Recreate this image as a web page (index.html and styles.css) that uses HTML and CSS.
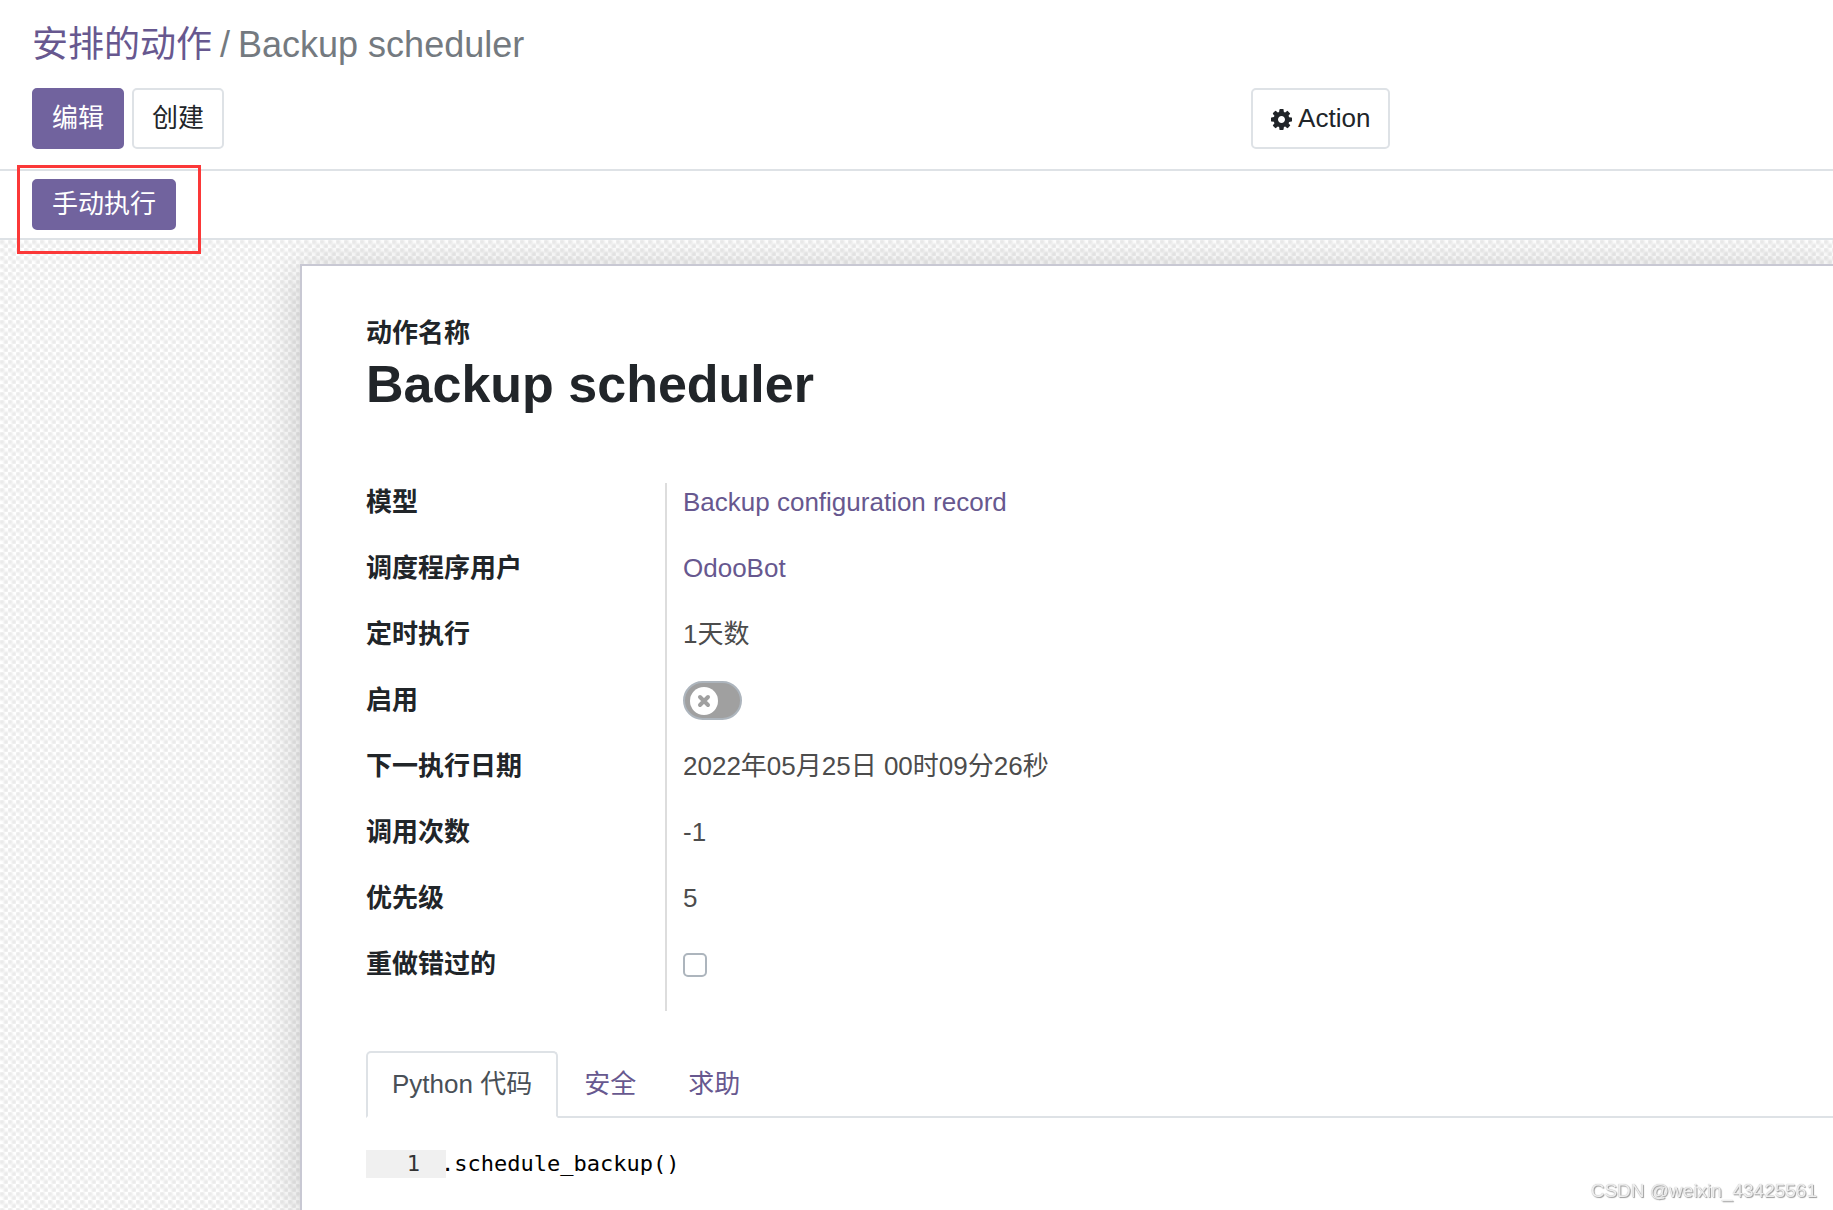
FILE: index.html
```html
<!DOCTYPE html>
<html lang="zh-CN">
  <head>
    <meta charset="utf-8" />
    <title>Backup scheduler - Odoo</title>
    <link rel="stylesheet" href="styles.css">
  </head>
  <body>
    <header class="control-panel">
      <h1 class="breadcrumb">
        <a href="#">安排的动作</a>
        <span class="separator">/</span>
        <span>Backup scheduler</span>
      </h1>
      <div class="cp-bottom">
        <div class="cp-left">
          <button type="button" class="btn btn-primary">编辑</button>
          <button type="button" class="btn btn-secondary">创建</button>
        </div>
        <div class="cp-right">
          <button type="button" class="btn btn-secondary">
            <svg class="icon-cog" viewBox="0 0 1536 1536" aria-hidden="true">
              <path d="M1024 768q0-106-75-181t-181-75-181 75-75 181 75 181 181 75 181-75 75-181zm512-109v222q0 12-8 23t-20 13l-185 28q-19 54-39 91 35 50 107 138 10 12 10 25t-9 23q-27 37-99 108t-94 71q-12 0-26-9l-138-108q-44 23-91 38-16 136-29 186-7 28-36 28H657q-14 0-24.500-8.500T621 1506l-28-184q-49-16-90-37l-141 107q-10 9-25 9-14 0-25-11-126-114-165-168-7-10-7-23 0-12 8-23 15-21 51-66.500t54-70.500q-27-50-41-99L29 913q-13-2-21-12.500T0 877V655q0-12 8-23t19-13l186-28q14-46 39-92-40-57-107-138-10-12-10-24 0-10 9-23 26-36 98.500-107.500T337 135q13 0 26 10l138 107q44-23 91-38 16-136 29-186 7-28 36-28h222q14 0 24.500 8.500T915 30l28 184q49 16 90 37l142-107q9-9 24-9 13 0 25 10 129 119 165 170 7 8 7 22 0 12-8 23-15 21-51 66.500t-54 70.500q26 50 41 98l183 28q13 2 21 12.500t8 23.500z" />
            </svg>
            Action
          </button>
        </div>
      </div>
    </header>

    <div class="statusbar">
      <button type="button" class="btn btn-primary btn-sm">手动执行</button>
      <div class="highlight"></div>
    </div>

    <main class="sheet-bg">
      <div class="sheet">
        <div class="title">
          <div class="title-label">动作名称</div>
          <h2>Backup scheduler</h2>
        </div>

        <div class="group">
          <div class="field">
            <div class="field-label">模型</div>
            <div class="field-value"><a href="#">Backup configuration record</a></div>
          </div>
          <div class="field">
            <div class="field-label">调度程序用户</div>
            <div class="field-value"><a href="#">OdooBot</a></div>
          </div>
          <div class="field">
            <div class="field-label">定时执行</div>
            <div class="field-value">1天数</div>
          </div>
          <div class="field">
            <label class="field-label" for="active">启用</label>
            <div class="field-value">
              <span class="switch">
                <input type="checkbox" id="active" />
                <svg viewBox="0 0 28 28" aria-hidden="true">
                  <circle cx="14" cy="14" r="14" fill="#fff" />
                  <path d="M10 10l8 8M18 10l-8 8" stroke="#a0a0a0" stroke-width="4" stroke-linecap="round" />
                </svg>
              </span>
            </div>
          </div>
          <div class="field">
            <div class="field-label">下一执行日期</div>
            <div class="field-value">2022年05月25日 00时09分26秒</div>
          </div>
          <div class="field">
            <div class="field-label">调用次数</div>
            <div class="field-value">-1</div>
          </div>
          <div class="field">
            <div class="field-label">优先级</div>
            <div class="field-value">5</div>
          </div>
          <div class="field">
            <label class="field-label" for="doall">重做错过的</label>
            <div class="field-value"><input type="checkbox" class="checkbox" id="doall" /></div>
          </div>
        </div>

        <nav class="tabs">
          <a href="#" class="tab active">Python 代码</a>
          <a href="#" class="tab">安全</a>
          <a href="#" class="tab">求助</a>
        </nav>

        <div class="editor">
          <span class="gutter">1</span>
          <code>.schedule_backup()</code>
        </div>
      </div>
    </main>

    <div class="watermark">CSDN @weixin_43425561</div>
  </body>
</html>
```

FILE: styles.css
```css
* {
  box-sizing: border-box;
}

body {
  margin: 0;
  min-height: 100vh;
  display: flex;
  flex-direction: column;
  font-family: "Liberation Sans", Arial, "Noto Sans CJK SC", sans-serif;
  font-size: 26px;
  line-height: 39px;
  color: #4c4c4c;
  background-color: #fff;
}

a {
  color: #67588f;
  text-decoration: none;
}

.control-panel {
  padding: 18px 0 20px 32px;
  border-bottom: 2px solid #dee2e6;
}

.breadcrumb {
  display: flex;
  gap: 8px;
  margin: 0 0 16px;
  font-size: 36px;
  font-weight: normal;
  line-height: 54px;
  color: #747a80;
}

.cp-bottom {
  display: grid;
  grid-template-columns: 2fr 1fr;
  gap: 56px;
}

.cp-left {
  display: flex;
  gap: 8px;
}

.btn {
  padding: 9px 18px;
  border: 2px solid transparent;
  border-radius: 5px;
  font: inherit;
  cursor: pointer;
}

.btn-primary {
  color: #fff;
  background-color: #71639e;
  border-color: #71639e;
}

.btn-secondary {
  color: #212529;
  background-color: #fff;
  border-color: #dee2e6;
}

.btn-sm {
  padding: 4px 18px;
}

.icon-cog {
  width: 21px;
  height: 21px;
  vertical-align: -3px;
  fill: #212529;
}

.statusbar {
  position: relative;
  padding: 8px 32px;
  border-bottom: 2px solid #dee2e6;
}

.statusbar .btn {
  display: block;
}

/* red frame round the manual run button */
.highlight {
  position: absolute;
  z-index: 1;
  top: -6px;
  left: 17px;
  width: 184px;
  height: 89px;
  border: 3px solid #fb3838;
  pointer-events: none;
}

.sheet-bg {
  flex: 1;
  display: flex;
  padding: 24px 0 0 300px;
  overflow: hidden;
  background-color: #fff;
  background-image:
    radial-gradient(circle at 2px 2px, #ebebeb 1px, transparent 4px),
    radial-gradient(circle at 6px 6px, #ebebeb 1px, transparent 4px);
  background-size: 8px 8px;
}

.sheet {
  flex: 1;
  padding: 48px 0 32px 64px;
  border: 2px solid #c8c8d3;
  border-right: 0;
  border-bottom: 0;
  background-color: #fff;
  box-shadow: 0 8px 40px rgba(0, 0, 0, 0.2);
}

.title {
  margin-bottom: 68px;
  color: #212529;
}

.title-label {
  font-weight: bold;
}

.title h2 {
  margin: 0;
  font-size: 52px;
  line-height: 62px;
}

.group {
  margin-bottom: 40px;
}

.field {
  display: flex;
  height: 66px;
}

.field-label {
  width: 299px;
  font-weight: bold;
  color: #212529;
}

.field-value {
  flex: 1;
  padding-left: 16px;
  border-left: 2px solid #ddd;
}

.switch {
  position: relative;
  display: block;
  width: 59px;
  height: 39px;
}

.switch input {
  display: block;
  width: 100%;
  height: 100%;
  margin: 0;
  appearance: none;
  border: 2px solid #adb5bd;
  border-radius: 20px;
  background-color: #a0a0a0;
}

.switch svg {
  position: absolute;
  top: 6px;
  left: 7px;
  width: 28px;
  height: 28px;
  pointer-events: none;
}

.checkbox {
  display: block;
  width: 24px;
  height: 24px;
  margin: 8px 0;
  appearance: none;
  border: 2px solid #adb5bd;
  border-radius: 5px;
  background-color: #fff;
}

.tabs {
  display: flex;
  border-bottom: 2px solid #dee2e6;
}

.tab {
  margin-bottom: -2px;
  padding: 12px 24px;
  border: 2px solid transparent;
  border-radius: 5px 5px 0 0;
}

.tab.active {
  color: #495057;
  background-color: #fff;
  border-color: #dee2e6 #dee2e6 #fff;
}

.editor {
  display: flex;
  margin-top: 32px;
  font-family: "DejaVu Sans Mono", monospace;
  font-size: 22px;
  line-height: 28px;
  color: #000;
}

/* the gutter lies over the start of the scrolled line */
.gutter {
  z-index: 1;
  width: 80px;
  margin-right: -5px;
  padding-right: 26px;
  text-align: right;
  color: #333;
  background-color: #f0f0f0;
}

.editor code {
  font-family: inherit;
}

.watermark {
  position: fixed;
  right: 16px;
  bottom: 6px;
  font-size: 19px;
  line-height: 26px;
  color: #eee;
  text-shadow: 1px 1px 1px #999, 0 0 1px #aaa;
}
```
